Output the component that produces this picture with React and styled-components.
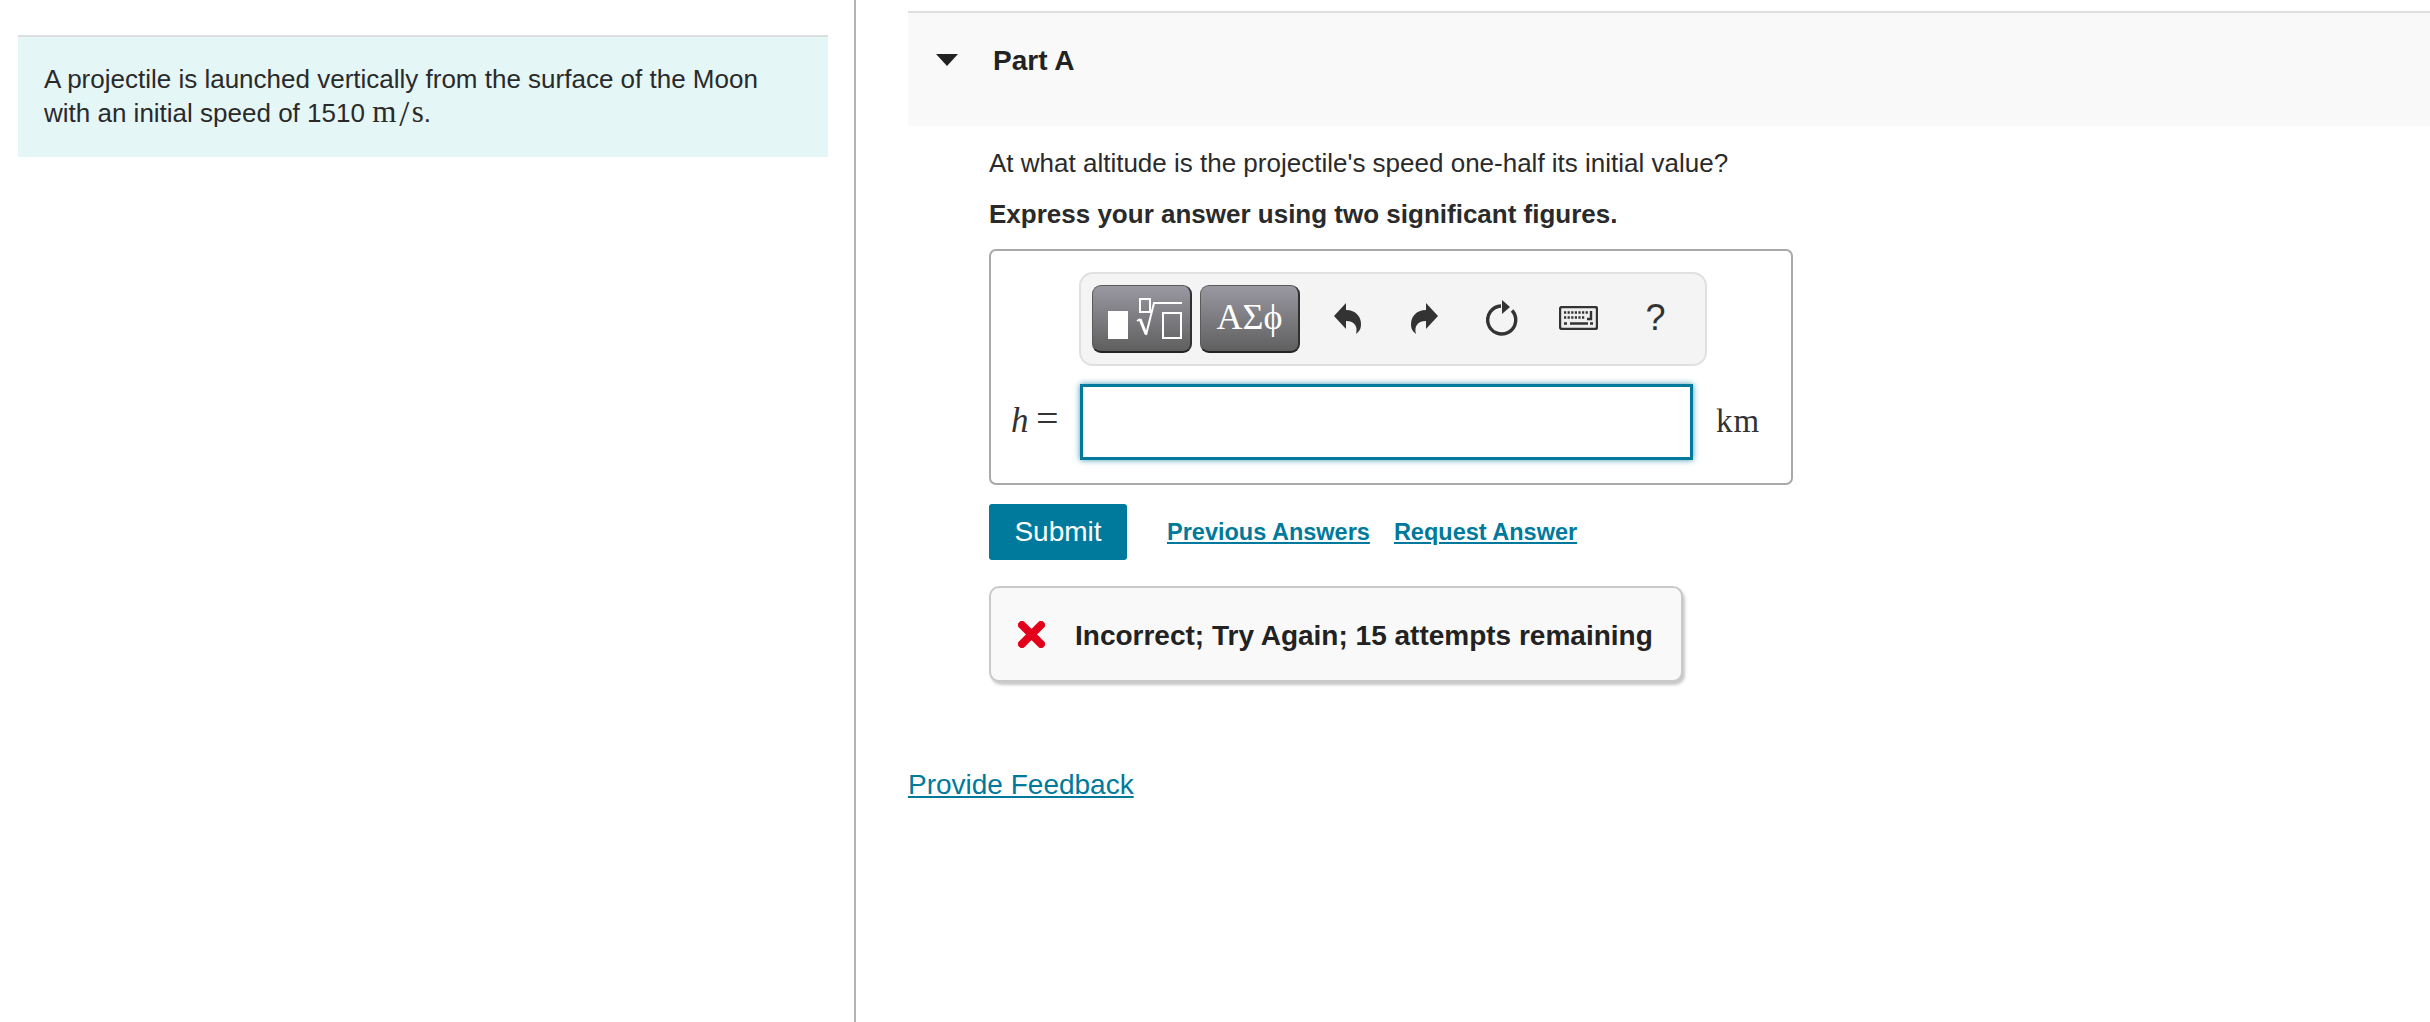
import React from 'react';
import styled, { createGlobalStyle } from 'styled-components';

const GlobalStyle = createGlobalStyle`
  html, body { margin: 0; padding: 0; background: #fff; }
  body { font-family: "Liberation Sans", Arial, sans-serif; color: #222; }
`;

const Page = styled.div`
  display: flex;
  width: 2430px;
  height: 1022px;
  overflow: hidden;
`;

const LeftPane = styled.aside`
  width: 856px;
  flex: none;
  box-sizing: border-box;
  padding: 35px 26px 0 18px;
  border-right: 2px solid #b3b3b3;
`;

const Intro = styled.div`
  height: 122px;
  box-sizing: border-box;
  padding: 25px 26px 0;
  background: #e5f6f7;
  border-top: 2px solid #dcdfdf;
  font-size: 26px;
  line-height: 34px;
  color: #2a2a2a;
`;

const Math = styled.span`
  font-family: "Liberation Serif", serif;
  font-size: ${p => p.size || 29}px;
  font-style: ${p => (p.italic ? 'italic' : 'normal')};
  letter-spacing: ${p => p.spacing || 0}px;
  line-height: 0;
`;

const Slash = styled.span`
  font-family: "Liberation Serif", serif;
  font-size: 36px;
  font-weight: 100;
  line-height: 0;
  margin: 0 2.5px;
  vertical-align: -4px;
`;

const RightPane = styled.main`
  flex: 1;
  padding: 11px 0 0 52px;
`;

const PartHeader = styled.header`
  height: 115px;
  box-sizing: border-box;
  display: flex;
  align-items: flex-start;
  padding: 31px 0 0 28px;
  background: #f9f9f9;
  border-top: 2px solid #dfdfdf;
`;

const Caret = styled.span`
  width: 0;
  height: 0;
  margin: 10px 35px 0 0;
  border-left: 11px solid transparent;
  border-right: 11px solid transparent;
  border-top: 12px solid #222;
`;

const PartTitle = styled.h2`
  margin: 0;
  font-size: 28px;
  line-height: 34px;
  font-weight: 700;
  color: #222;
`;

const Content = styled.section`
  padding: 20px 0 0 81px;
`;

const Question = styled.p`
  margin: 0 0 17px;
  font-size: 26px;
  line-height: 34px;
  font-weight: ${p => (p.bold ? 700 : 400)};
  color: #2a2a2a;
`;

const AnswerBox = styled.div`
  width: 804px;
  height: 236px;
  box-sizing: border-box;
  margin-top: 18px;
  padding: 21px 0 0;
  border: 2px solid #a9a9a9;
  border-radius: 7px;
`;

const Toolbar = styled.div`
  width: 628px;
  height: 94px;
  box-sizing: border-box;
  display: flex;
  align-items: center;
  gap: 8px;
  margin-left: 88px;
  padding-left: 11px;
  background: #f4f4f4;
  border: 2px solid #e0e0e0;
  border-radius: 14px;
`;

const PaletteButton = styled.button`
  width: 100px;
  height: 68px;
  flex: none;
  display: flex;
  align-items: center;
  justify-content: center;
  padding: 0 0 ${p => (p.glyphs ? 3 : 0)}px;
  color: #fff;
  font-family: "Liberation Serif", serif;
  font-size: 36px;
  background: linear-gradient(#9a98a1, #5f5f5f);
  border: 1px solid #5a5a5a;
  border-bottom: 2px solid #232323;
  border-right: 2px solid #303030;
  border-radius: 9px;

  svg {
    margin-left: 7px;
  }
`;

const ToolIcons = styled.div`
  display: flex;
  margin-left: 1px;
`;

const ToolButton = styled.button`
  width: 77px;
  height: 60px;
  display: flex;
  align-items: center;
  justify-content: center;
  padding: 0 0 2px;
  border: 0;
  background: none;
  color: #333;
  font-family: "Liberation Sans", sans-serif;
  font-size: 36px;
`;

const InputRow = styled.div`
  display: flex;
  align-items: center;
  margin-top: 18px;
`;

const VarLabel = styled.label`
  width: 89px;
  box-sizing: border-box;
  padding: 9px 0 0 20px;
  color: #333;
  white-space: nowrap;
  word-spacing: 3px;
`;

const AnswerInput = styled.input`
  width: 613px;
  height: 76px;
  box-sizing: border-box;
  background: #fff;
  border: 3px solid #007a9c;
  outline: 0;
  box-shadow: 0 0 6px rgba(0, 122, 156, 0.75);
`;

const Unit = styled.span`
  margin-left: 23px;
  padding-top: 9px;
  color: #333;
`;

const Actions = styled.div`
  display: flex;
  align-items: center;
  margin-top: 19px;
`;

const SubmitButton = styled.button`
  width: 138px;
  height: 56px;
  padding: 0;
  color: #fff;
  font-family: "Liberation Sans", sans-serif;
  font-size: 28px;
  background: #007a9c;
  border: 0;
  border-radius: 3px;
`;

const ActionLink = styled.a`
  margin-left: ${p => p.gap}px;
  color: #007a9c;
  font-size: 23.5px;
  font-weight: 700;
  text-decoration: underline;
`;

const Feedback = styled.div`
  width: 694px;
  height: 96px;
  box-sizing: border-box;
  display: flex;
  align-items: center;
  gap: 30px;
  margin-top: 26px;
  padding-left: 27px;
  background: #f9f9f9;
  border: 2px solid #c9c9c9;
  border-radius: 10px;
  box-shadow: 2px 3px 3px #c9c9c9;
  font-size: 28px;
  font-weight: 700;
  color: #222;
`;

const FeedbackText = styled.span`
  padding-top: 3px;
`;

const FeedbackLink = styled.a`
  display: block;
  margin-top: 86px;
  color: #007a9c;
  font-size: 28px;
  line-height: 34px;
  text-decoration: underline;
`;

const MathPaletteIcon = () => (
  <svg width="74" height="41" viewBox="0 0 74 41" fill="none">
    <rect x="0" y="13" width="20" height="28" fill="#fff" />
    <rect x="32" y="1" width="10" height="13" stroke="#fff" strokeWidth="2" />
    <path d="M29 23l3-2" stroke="#fff" strokeWidth="1.6" />
    <path d="M32 21l6 15" stroke="#fff" strokeWidth="3" />
    <path d="M38 37l8-32h28" stroke="#fff" strokeWidth="2" />
    <rect x="55" y="15" width="18" height="25" stroke="#fff" strokeWidth="2" />
  </svg>
);

const ReplyIcon = ({ flip }) => (
  <svg width="27" height="31" viewBox="0 0 27 31" style={flip ? { transform: 'scaleX(-1)' } : undefined}>
    <path d="M0 13L12 0v7c10 0 15 7 15 14 0 4-1 7-5 10 2-7-1-13-10-13v8z" fill="#333" />
  </svg>
);

const ReloadIcon = () => (
  <svg width="32" height="36" viewBox="0 0 32 36" fill="none">
    <path d="M26 10.5A14 14 0 1 1 15 6" stroke="#333" strokeWidth="3.4" />
    <path d="M16 0l8 7-8 7z" fill="#333" />
  </svg>
);

const KeyboardIcon = () => (
  <svg width="39" height="24" viewBox="0 0 39 24" fill="none">
    <rect x="1" y="1" width="37" height="22" rx="2" fill="#eeeeee" stroke="#333" strokeWidth="2.4" />
    <path d="M5 6.5h24" stroke="#333" strokeWidth="2.4" strokeDasharray="2.2 1.4" />
    <path d="M5 11.5h21" stroke="#333" strokeWidth="2.4" strokeDasharray="2.2 1.4" />
    <path d="M32 5v8h-4" stroke="#333" strokeWidth="2.4" />
    <path d="M5 17.5h3M11 17.5h18M31 17.5h3" stroke="#333" strokeWidth="2.4" />
  </svg>
);

const CrossIcon = () => (
  <svg width="27" height="27" viewBox="0 0 27 27">
    <path d="M4 4l19 19M23 4L4 23" stroke="#e2001a" strokeWidth="8" strokeLinecap="round" />
  </svg>
);

export default function App() {
  return (
    <Page>
      <GlobalStyle />
      <LeftPane>
        <Intro>
          A projectile is launched vertically from the surface of the Moon
          <br />
          with an initial speed of 1510 <Math size={31} spacing={0.5}>m</Math><Slash>/</Slash><Math size={31}>s</Math>.
        </Intro>
      </LeftPane>
      <RightPane>
        <PartHeader>
          <Caret />
          <PartTitle>Part A</PartTitle>
        </PartHeader>
        <Content>
          <Question>At what altitude is the projectile's speed one-half its initial value?</Question>
          <Question bold>Express your answer using two significant figures.</Question>
          <AnswerBox>
            <Toolbar>
              <PaletteButton><MathPaletteIcon /></PaletteButton>
              <PaletteButton glyphs>ΑΣϕ</PaletteButton>
              <ToolIcons>
                <ToolButton><ReplyIcon /></ToolButton>
                <ToolButton><ReplyIcon flip /></ToolButton>
                <ToolButton><ReloadIcon /></ToolButton>
                <ToolButton><KeyboardIcon /></ToolButton>
                <ToolButton>?</ToolButton>
              </ToolIcons>
            </Toolbar>
            <InputRow>
              <VarLabel><Math size={35} italic>h</Math> <Math size={40}>=</Math></VarLabel>
              <AnswerInput />
              <Unit><Math size={33} spacing={1}>km</Math></Unit>
            </InputRow>
          </AnswerBox>
          <Actions>
            <SubmitButton>Submit</SubmitButton>
            <ActionLink gap={40}>Previous Answers</ActionLink>
            <ActionLink gap={24}>Request Answer</ActionLink>
          </Actions>
          <Feedback>
            <CrossIcon />
            <FeedbackText>Incorrect; Try Again; 15 attempts remaining</FeedbackText>
          </Feedback>
        </Content>
        <FeedbackLink>Provide Feedback</FeedbackLink>
      </RightPane>
    </Page>
  );
}
